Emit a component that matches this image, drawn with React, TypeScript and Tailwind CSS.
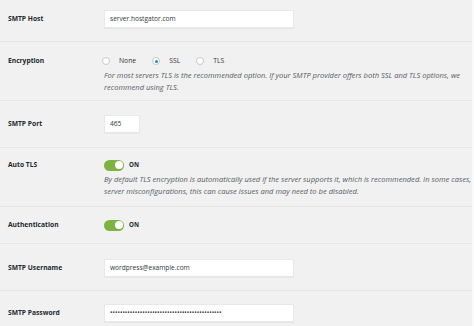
import { ReactNode } from "react";

const Row = ({ label, children, className }: { label: string; children: ReactNode; className: string }) => (
  <div className={`flex border-b border-[#e6e6e6] ${className}`}>
    <div className="w-[104px] shrink-0 pl-[8px] text-[6.7px] font-bold text-[#23282d] leading-[18px]">{label}</div>
    <div className="flex-1 min-w-0">{children}</div>
  </div>
);

const Input = ({ value, width }: { value: string; width: string }) => (
  <div className={`${width} h-[18px] bg-white border border-[#e8e8e8] shadow-[0_1px_1px_rgba(0,0,0,0.04)] px-[5px] text-[6.6px] leading-[16px] text-[#32373c] whitespace-nowrap overflow-hidden`}>
    {value}
  </div>
);

const Toggle = () => (
  <div className="flex items-center gap-[5px] h-[18px]">
    <div className="w-[20px] h-[11px] rounded-full bg-[#7cb342] flex items-center justify-end pr-[1.5px]">
      <div className="w-[8px] h-[8px] rounded-full bg-white" />
    </div>
    <span className="text-[6.2px] font-bold text-[#23282d]">ON</span>
  </div>
);

const Radio = ({ label, checked }: { label: string; checked?: boolean }) => (
  <div className="flex items-center gap-[9px] mr-[16px]">
    <div className="w-[8px] h-[8px] rounded-full bg-white border border-[#c8c8c8] flex items-center justify-center">
      {checked && <div className="w-[3px] h-[3px] rounded-full bg-[#1e8cbe]" />}
    </div>
    <span className="text-[6.8px] text-[#32373c]">{label}</span>
  </div>
);

const Desc = ({ children }: { children: ReactNode }) => (
  <p className="text-[7.55px] italic leading-[11.5px] text-[#555d66] whitespace-nowrap overflow-hidden">{children}</p>
);

export default function App() {
  return (
    <div
      className="w-[474px] h-[326px] overflow-hidden bg-[#f1f1f1] border-r-[2px] border-r-[#fafafa]"
      style={{ fontFamily: '"Open Sans", "Liberation Sans", sans-serif' }}
    >
      <Row label="SMTP Host" className="h-[42px] pt-[10px]">
        <Input value="server.hostgator.com" width="w-[190px]" />
      </Row>

      <Row label="Encryption" className="h-[59px] pt-[10px]">
        <div className="flex items-center h-[18px] -ml-[2px]">
          <Radio label="None" />
          <Radio label="SSL" checked />
          <Radio label="TLS" />
        </div>
        <Desc>
          For most servers TLS is the recommended option. If your SMTP provider offers both SSL and TLS options, we
          <br />
          recommend using TLS.
        </Desc>
      </Row>

      <Row label="SMTP Port" className="h-[47px] pt-[14px]">
        <Input value="465" width="w-[36px]" />
      </Row>

      <Row label="Auto TLS" className="h-[59px] pt-[8px]">
        <Toggle />
        <Desc>
          By default TLS encryption is automatically used if the server supports it, which is recommended. In some cases, due to
          <br />
          server misconfigurations, this can cause issues and may need to be disabled.
        </Desc>
      </Row>

      <Row label="Authentication" className="h-[37px] pt-[9px]">
        <Toggle />
      </Row>

      <Row label="SMTP Username" className="h-[47px] pt-[15px]">
        <Input value="wordpress@example.com" width="w-[190px]" />
      </Row>

      <Row label="SMTP Password" className="h-[60px] pt-[13px] border-b-0">
        <Input value="•••••••••••••••••••••••••••••••••••••••••••••" width="w-[190px]" />
      </Row>
    </div>
  );
}
